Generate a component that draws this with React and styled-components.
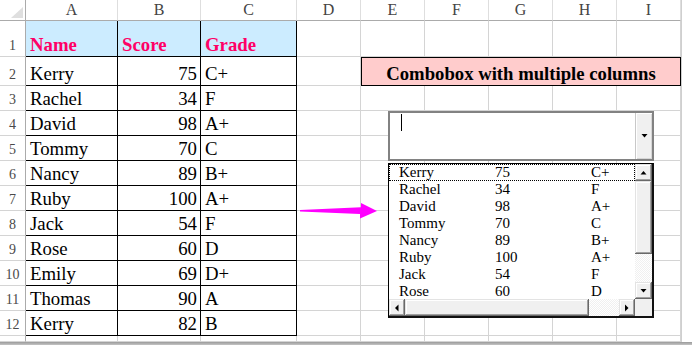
import React from 'react';
import styled, { createGlobalStyle } from 'styled-components';

const SERIF = `"Liberation Serif", "Times New Roman", Times, serif`;

const GlobalStyle = createGlobalStyle`
  html, body {
    margin: 0;
    padding: 0;
    background: #ffffff;
    overflow: hidden;
  }
  body {
    font-family: ${SERIF};
  }
`;

const COLUMNS = ['A', 'B', 'C', 'D', 'E', 'F', 'G', 'H', 'I'];
const WIDTHS = [92, 83, 96, 64, 64, 64, 64, 64, 64];

const people = [
  ['Kerry', 75, 'C+'],
  ['Rachel', 34, 'F'],
  ['David', 98, 'A+'],
  ['Tommy', 70, 'C'],
  ['Nancy', 89, 'B+'],
  ['Ruby', 100, 'A+'],
  ['Jack', 54, 'F'],
  ['Rose', 60, 'D'],
  ['Emily', 69, 'D+'],
  ['Thomas', 90, 'A'],
  ['Kerry', 82, 'B'],
];

const GRID = '#d4d4d4';
const HEAD_LINE = '#ababab';

const App = () => (
  <>
    <GlobalStyle />
    <Sheet>
      <Corner />
      {COLUMNS.map((c) => (
        <ColHead key={c}>{c}</ColHead>
      ))}
      <Edge />

      <RowHead>1</RowHead>
      <Cell $table $head>Name</Cell>
      <Cell $table $head>Score</Cell>
      <Cell $table $head>Grade</Cell>
      {COLUMNS.slice(3).map((c) => (
        <Cell key={c} />
      ))}
      <Edge />

      {people.map(([name, score, grade], i) => (
        <React.Fragment key={i}>
          <RowHead>{i + 2}</RowHead>
          <Cell $table>{name}</Cell>
          <Cell $table $right>{score}</Cell>
          <Cell $table>{grade}</Cell>
          <Cell />
          {i === 0 ? (
            <Banner>Combobox with multiple columns</Banner>
          ) : (
            COLUMNS.slice(4).map((c) => <Cell key={c} />)
          )}
          <Edge />
        </React.Fragment>
      ))}

      <RowHead />
      {COLUMNS.map((c) => (
        <Cell key={c} />
      ))}
      <Edge />

      <Pointer width="82" height="22" viewBox="0 0 82 22">
        <polygon
          points="2,10 63,7.3 63,3 79,11 62,18.4 62,14 2,11.6"
          fill="#ff00ff"
        />
      </Pointer>

      <ComboBox>
        <ComboField>
          <Caret />
          <DropButton>
            <Triangle dir="down" />
          </DropButton>
        </ComboField>
      </ComboBox>

      <ListBox>
        <Items>
          {people.slice(0, 8).map(([name, score, grade], i) => (
            <Item key={i} $focused={i === 0}>
              <span>{name}</span>
              <span>{score}</span>
              <span>{grade}</span>
            </Item>
          ))}
        </Items>
        <VScroll>
          <ScrollButton>
            <Triangle dir="up" />
          </ScrollButton>
          <Thumb $length="73px" />
          <Track />
          <ScrollButton>
            <Triangle dir="down" />
          </ScrollButton>
        </VScroll>
        <HScroll>
          <ScrollButton $wide>
            <Triangle dir="left" />
          </ScrollButton>
          <Thumb $length="184px" $horizontal />
          <Track />
          <ScrollButton $wide>
            <Triangle dir="right" />
          </ScrollButton>
        </HScroll>
        <ScrollCorner />
      </ListBox>
    </Sheet>
    <WindowEdge />
  </>
);

const Triangle = ({ dir }) => {
  const shapes = {
    up: '0.5,4.5 3.5,1 6.5,4.5',
    down: '0.5,1 6.5,1 3.5,4.5',
    left: '4.5,0.5 4.5,7.5 1,4',
    right: '1,0.5 1,7.5 4.5,4',
  };
  const vertical = dir === 'up' || dir === 'down';
  return (
    <svg
      width={vertical ? 7 : 6}
      height={vertical ? 6 : 8}
      viewBox={vertical ? '0 0 7 6' : '0 0 6 8'}
    >
      <polygon points={shapes[dir]} fill="#000" />
    </svg>
  );
};

export default App;

const Sheet = styled.div`
  position: relative;
  display: grid;
  grid-template-columns: 26px ${WIDTHS.map((w) => `${w}px`).join(' ')} 11px;
  grid-template-rows: 21px 36px 29px repeat(10, 25px) 6px;
  width: 692px;
  overflow: hidden;
  font-family: ${SERIF};
`;

const Corner = styled.div`
  position: relative;
  border-right: 1px solid ${HEAD_LINE};
  border-bottom: 1px solid ${HEAD_LINE};

  &::after {
    content: '';
    position: absolute;
    left: 11px;
    top: 7px;
    width: 12px;
    height: 11px;
    background: #dfdfdf;
    clip-path: polygon(100% 0, 100% 100%, 0 100%);
  }
`;

const ColHead = styled.div`
  display: flex;
  align-items: center;
  justify-content: center;
  border-right: 1px solid #dedede;
  border-bottom: 1px solid ${HEAD_LINE};
  font-family: ${SERIF};
  font-size: 16px;
  color: #444;
`;

const RowHead = styled.div`
  display: flex;
  align-items: flex-end;
  justify-content: center;
  padding-bottom: 2px;
  border-right: 1px solid ${HEAD_LINE};
  border-bottom: 1px solid ${GRID};
  font-family: ${SERIF};
  font-size: 14px;
  color: #4a4a4a;
  overflow: hidden;
`;

const Cell = styled.div`
  display: flex;
  align-items: flex-end;
  justify-content: ${(p) => (p.$right ? 'flex-end' : 'flex-start')};
  padding: 0 3px 0 4px;
  border-right: 1px solid ${(p) => (p.$table ? '#000' : GRID)};
  border-bottom: 1px solid ${(p) => (p.$table ? '#000' : GRID)};
  background: ${(p) => (p.$head ? '#ccecff' : '#fff')};
  color: ${(p) => (p.$head ? '#ff0066' : '#000')};
  font-family: ${SERIF};
  font-weight: ${(p) => (p.$head ? 700 : 400)};
  font-size: 18.8px;
  line-height: 1.15;
  white-space: nowrap;
  overflow: hidden;
`;

const Banner = styled.div`
  grid-column: span 5;
  display: flex;
  align-items: flex-end;
  justify-content: center;
  border: 1px solid #000;
  background: #ffcccc;
  font-family: ${SERIF};
  font-size: 18.7px;
  font-weight: 700;
  line-height: 1.15;
  padding-bottom: 1px;
`;

const Edge = styled.div`
  border-left: 1px solid #cfcfcf;
  background: #fff;
`;

const WindowEdge = styled.div`
  height: 3px;
  background: linear-gradient(#9a9a9a, #c4c4c4);
`;

const Pointer = styled.svg`
  position: absolute;
  left: 298px;
  top: 200px;
`;

const ComboBox = styled.div`
  position: absolute;
  left: 388px;
  top: 111px;
  width: 266px;
`;

const ComboField = styled.div`
  display: flex;
  justify-content: space-between;
  height: 50px;
  box-sizing: border-box;
  border: 2px solid #828282;
  background: #fff;
`;

const Caret = styled.span`
  width: 1px;
  height: 17px;
  margin: 1px 0 0 11px;
  background: #000;
`;

const DropButton = styled.div`
  display: flex;
  align-items: center;
  justify-content: center;
  width: 17px;
  box-sizing: border-box;
  background: #f0f0f0;
  border-left: 1px solid #c8c8c8;
  box-shadow: inset 1px 1px #ffffff, inset -1px -1px #d6d6d6;
`;

const ListBox = styled.div`
  position: absolute;
  left: 388px;
  top: 163px;
  width: 266px;
  height: 155px;
  box-sizing: border-box;
  display: grid;
  grid-template-columns: 1fr 17px;
  grid-template-rows: 1fr 17px;
  border-left: 1px solid #000;
  border-top: 1px solid #000;
  border-right: 2px solid #111;
  border-bottom: 2px solid #111;
  background: #fff;
`;

const Items = styled.div`
  display: flex;
  flex-direction: column;
  overflow: hidden;
`;

const Item = styled.div`
  display: grid;
  grid-template-columns: 96px 96px 1fr;
  height: 17px;
  padding-left: 10px;
  font-family: ${SERIF};
  font-size: 15px;
  line-height: 17px;
  color: #000;
  outline: ${(p) => (p.$focused ? '1px dotted #000' : 'none')};
  outline-offset: -1px;
`;

const VScroll = styled.div`
  display: flex;
  flex-direction: column;
`;

const HScroll = styled.div`
  display: flex;
`;

const ScrollButton = styled.div`
  flex: none;
  display: flex;
  align-items: center;
  justify-content: center;
  width: ${(p) => (p.$wide ? '16px' : '17px')};
  height: 17px;
  box-sizing: border-box;
  background: #f0f0f0;
  box-shadow: inset -1px -1px #696969, inset 1px 1px #e3e3e3,
    inset -2px -2px #a0a0a0, inset 2px 2px #ffffff;
`;

const Thumb = styled.div`
  flex: none;
  ${(p) => (p.$horizontal ? `width: ${p.$length};` : `height: ${p.$length};`)}
  background: #f0f0f0;
  box-shadow: inset -1px -1px #696969, inset 1px 1px #e3e3e3,
    inset -2px -2px #a0a0a0, inset 2px 2px #ffffff;
`;

const Track = styled.div`
  flex: 1;
  background: repeating-conic-gradient(#f0f0f0 0 25%, #ffffff 0 50%) 0 0 / 2px 2px;
`;

const ScrollCorner = styled.div`
  background: #f0f0f0;
`;
